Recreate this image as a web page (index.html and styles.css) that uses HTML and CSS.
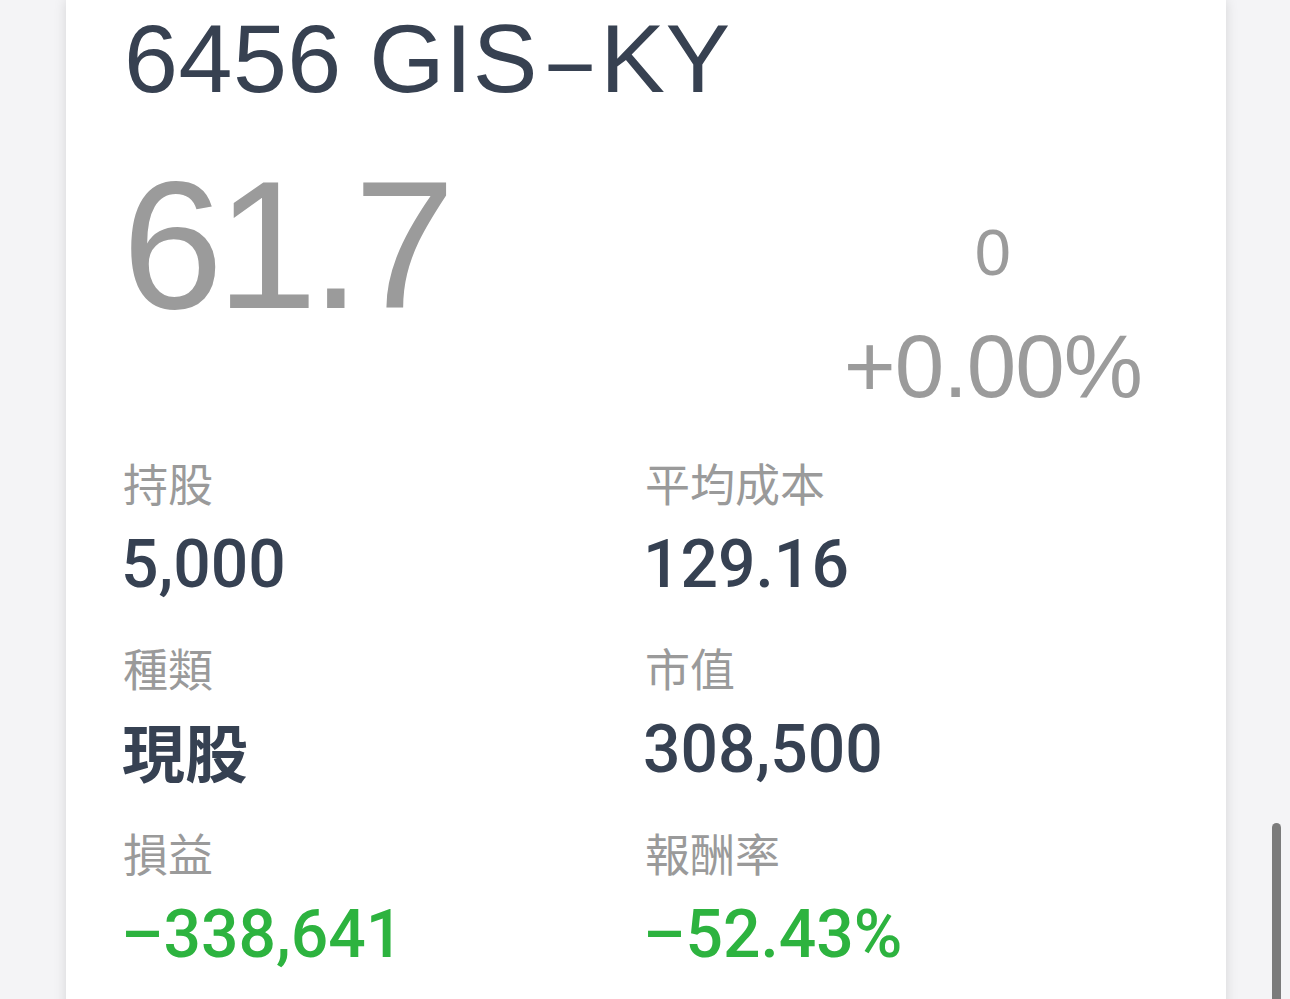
FILE: index.html
```html
<!DOCTYPE html>
<html lang="zh-Hant">
<head>
<meta charset="utf-8">
<title>6456 GIS–KY</title>
<link rel="stylesheet" href="styles.css">
</head>
<body>
<main class="card">
  <h1 class="title">6456 GIS<span class="title-dash">–</span>KY</h1>
  <section class="price-row">
    <div class="price">61.7</div>
    <div class="change">
      <div class="change-abs">0</div>
      <div class="change-pct">+0.00%</div>
    </div>
  </section>
  <section class="stats">
    <div class="stat">
      <div class="label">持股</div>
      <div class="value">5,000</div>
    </div>
    <div class="stat">
      <div class="label">平均成本</div>
      <div class="value">129.16</div>
    </div>
    <div class="stat">
      <div class="label">種類</div>
      <div class="value value-cjk">現股</div>
    </div>
    <div class="stat">
      <div class="label">市值</div>
      <div class="value">308,500</div>
    </div>
    <div class="stat">
      <div class="label">損益</div>
      <div class="value negative">–338,641</div>
    </div>
    <div class="stat">
      <div class="label">報酬率</div>
      <div class="value negative">–52.43%</div>
    </div>
  </section>
</main>
<div class="scrollbar"></div>
</body>
</html>
```

FILE: styles.css
```css
html, body {
  margin: 0;
  padding: 0;
}

body {
  background: #f4f4f6;
  font-family: "Liberation Sans", Arial, "Noto Sans CJK TC", sans-serif;
  height: 999px;
  overflow: hidden;
}

.card {
  margin-left: 66px;
  width: 1160px;
  min-height: 1100px;
  box-sizing: border-box;
  background: #ffffff;
  padding: 10px 58px 0 58px;
  box-shadow: 0 0 12px rgba(0, 0, 0, 0.13);
}

.title {
  margin: 0;
  font-size: 97px;
  line-height: 97px;
  font-weight: 400;
  color: #374151;
  letter-spacing: 0.5px;
  white-space: nowrap;
}

.title-dash {
  display: inline-block;
  margin: 0 3px 0 5px;
  transform: scaleX(0.8);
}

.price-row {
  display: flex;
  align-items: flex-start;
  margin-top: 47px;
}

.price {
  font-size: 182px;
  line-height: 182px;
  color: #9b9b9b;
  letter-spacing: -7px;
  margin-left: -2px;
}

.change {
  margin-left: auto;
  margin-right: 26px;
  margin-top: 66px;
  display: flex;
  flex-direction: column;
  align-items: center;
  color: #9b9b9b;
}

.change-abs {
  font-size: 65px;
  line-height: 65px;
}

.change-pct {
  margin-top: 37px;
  font-size: 89px;
  line-height: 89px;
  letter-spacing: -1px;
}

.stats {
  display: grid;
  grid-template-columns: 1fr 1fr;
  row-gap: 33px;
  margin-top: 42px;
}

.label {
  font-family: "Noto Sans CJK TC", sans-serif;
  font-size: 45px;
  line-height: 60px;
  color: #9a9a9a;
  font-weight: 400;
  margin-bottom: 12px;
  margin-left: -1px;
}

.value {
  font-family: Roboto, "Noto Sans CJK TC", sans-serif;
  font-weight: 500;
  font-size: 66px;
  line-height: 80px;
  color: #364152;
  letter-spacing: 0;
  margin-left: -3px;
}

.value-cjk {
  font-family: "Noto Sans CJK TC", sans-serif;
  font-weight: 700;
  font-size: 63px;
  margin-left: -2px;
}

.negative {
  color: #2db33f;
}

.scrollbar {
  position: fixed;
  left: 1272px;
  top: 823px;
  width: 9px;
  height: 190px;
  border-radius: 5px;
  background: #7b7b7b;
}
```
